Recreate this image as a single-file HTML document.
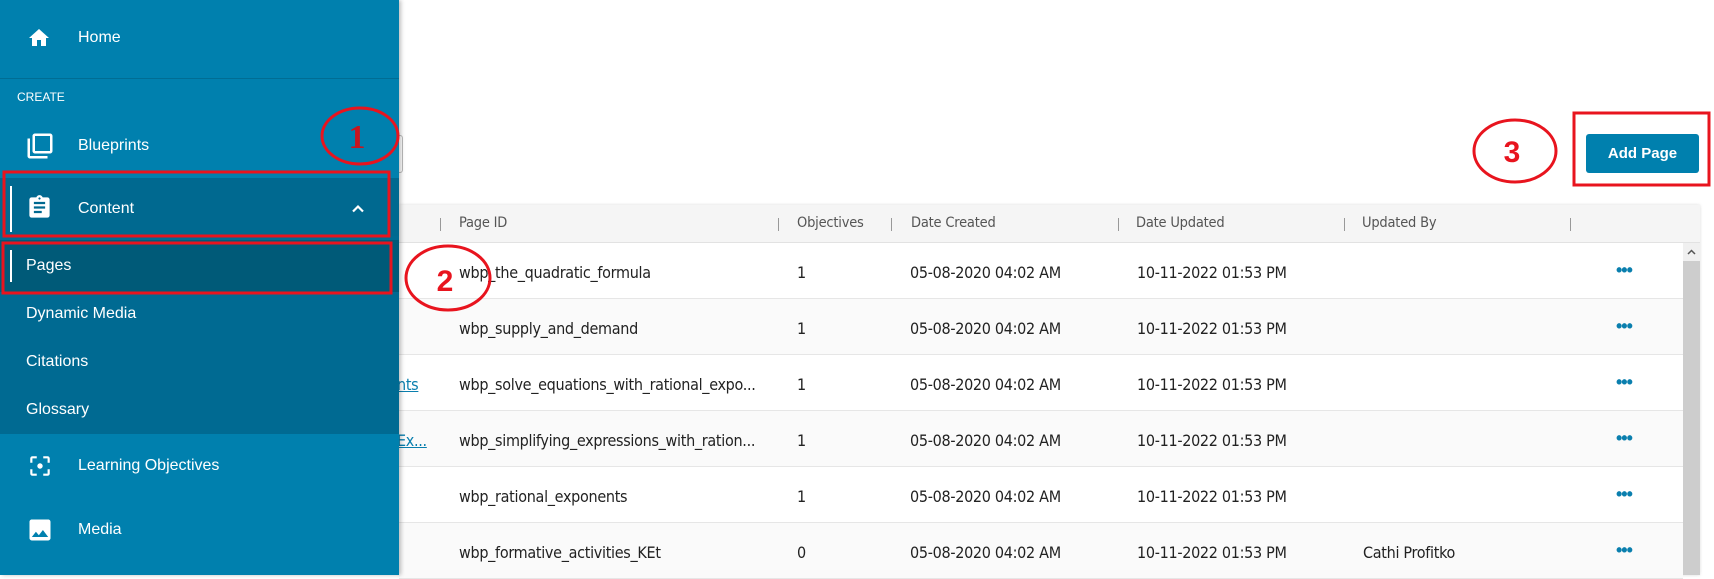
<!DOCTYPE html>
<html><head><meta charset="utf-8"><style>
*{margin:0;padding:0;box-sizing:border-box}
body{width:1714px;height:575px;overflow:hidden;background:#fff;font-family:"Liberation Sans",sans-serif;position:relative}
.a{position:absolute}
.sb{left:0;top:0;width:399px;height:575px;background:#0080ae;color:#fff;box-shadow:2px 0 4px rgba(0,0,0,.25)}
.sb .t{position:absolute;font-size:16px;white-space:nowrap}
.hd{font-size:14.5px;color:#555;white-space:nowrap;font-family:"DejaVu Sans Condensed","Liberation Sans",sans-serif;letter-spacing:-.2px}
.cell{font-size:16px;color:#222;white-space:nowrap;font-family:"DejaVu Sans Condensed","Liberation Sans",sans-serif;letter-spacing:-.3px}
.sep{width:1px;height:13px;background:#999}
.row{left:399px;width:1284px;height:56px;border-bottom:1px solid #e6e6e6}
.dots{color:#0a7fae;font-size:18px;font-weight:bold;letter-spacing:-1px}
</style></head><body>

<div class="a" style="left:380px;top:135px;width:23px;height:38px;border:1px solid #bbb;border-radius:3px"></div>

<div class="a" style="left:399px;top:205px;width:1301px;height:370px;box-shadow:0 0 3px rgba(0,0,0,.15)"></div>
<div class="a" style="left:399px;top:205px;width:1301px;height:38px;background:#f5f5f5;border-bottom:1px solid #e2e2e2"></div>
<div class="a sep" style="left:440px;top:218px"></div>
<div class="a hd" style="left:459px;top:215px">Page ID</div>
<div class="a sep" style="left:778px;top:218px"></div>
<div class="a hd" style="left:797px;top:215px">Objectives</div>
<div class="a sep" style="left:891px;top:218px"></div>
<div class="a hd" style="left:911px;top:215px">Date Created</div>
<div class="a sep" style="left:1118px;top:218px"></div>
<div class="a hd" style="left:1136px;top:215px">Date Updated</div>
<div class="a sep" style="left:1344px;top:218px"></div>
<div class="a hd" style="left:1362px;top:215px">Updated By</div>
<div class="a sep" style="left:1570px;top:218px"></div>

<div class="a row" style="top:243px;background:#fff"></div>
<div class="a row" style="top:299px;background:#fafafa"></div>
<div class="a row" style="top:355px;background:#fff"></div>
<div class="a row" style="top:411px;background:#fafafa"></div>
<div class="a row" style="top:467px;background:#fff"></div>
<div class="a row" style="top:523px;background:#fafafa"></div>

<div class="a" style="left:1683px;top:243px;width:17px;height:332px;background:#f0f0f0"></div>
<div class="a" style="left:1683px;top:261px;width:17px;height:314px;background:#cdcdcd"></div>
<svg class="a" style="left:1686px;top:247px" width="11" height="10" viewBox="0 0 11 10"><path d="M2 7l3.5-3.5L9 7" fill="none" stroke="#555" stroke-width="1.5"/></svg>

<div class="a cell" style="left:459px;top:263px">wbp_the_quadratic_formula</div>
<div class="a cell" style="left:459px;top:319px">wbp_supply_and_demand</div>
<div class="a cell" style="left:459px;top:375px">wbp_solve_equations_with_rational_expo...</div>
<div class="a cell" style="left:459px;top:431px">wbp_simplifying_expressions_with_ration...</div>
<div class="a cell" style="left:459px;top:487px">wbp_rational_exponents</div>
<div class="a cell" style="left:459px;top:543px">wbp_formative_activities_KEt</div>

<div class="a cell" style="left:397px;top:375px;color:#0a7fae;text-decoration:underline">nts</div>
<div class="a cell" style="left:397px;top:431px;color:#0a7fae;text-decoration:underline">Ex...</div>

<div class="a cell" style="left:797px;top:263px">1</div>
<div class="a cell" style="left:797px;top:319px">1</div>
<div class="a cell" style="left:797px;top:375px">1</div>
<div class="a cell" style="left:797px;top:431px">1</div>
<div class="a cell" style="left:797px;top:487px">1</div>
<div class="a cell" style="left:797px;top:543px">0</div>

<div class="a cell" style="left:910px;top:263px">05-08-2020 04:02 AM</div>
<div class="a cell" style="left:910px;top:319px">05-08-2020 04:02 AM</div>
<div class="a cell" style="left:910px;top:375px">05-08-2020 04:02 AM</div>
<div class="a cell" style="left:910px;top:431px">05-08-2020 04:02 AM</div>
<div class="a cell" style="left:910px;top:487px">05-08-2020 04:02 AM</div>
<div class="a cell" style="left:910px;top:543px">05-08-2020 04:02 AM</div>

<div class="a cell" style="left:1137px;top:263px">10-11-2022 01:53 PM</div>
<div class="a cell" style="left:1137px;top:319px">10-11-2022 01:53 PM</div>
<div class="a cell" style="left:1137px;top:375px">10-11-2022 01:53 PM</div>
<div class="a cell" style="left:1137px;top:431px">10-11-2022 01:53 PM</div>
<div class="a cell" style="left:1137px;top:487px">10-11-2022 01:53 PM</div>
<div class="a cell" style="left:1137px;top:543px">10-11-2022 01:53 PM</div>
<div class="a cell" style="left:1363px;top:543px">Cathi Profitko</div>

<div class="a dots" style="left:1616px;top:260px">•••</div>
<div class="a dots" style="left:1616px;top:316px">•••</div>
<div class="a dots" style="left:1616px;top:372px">•••</div>
<div class="a dots" style="left:1616px;top:428px">•••</div>
<div class="a dots" style="left:1616px;top:484px">•••</div>
<div class="a dots" style="left:1616px;top:540px">•••</div>

<div class="a" style="left:1586px;top:134px;width:113px;height:39px;background:#0080ae;border-radius:3px;color:#fff;font-weight:bold;font-size:15px;text-align:center;line-height:39px">Add Page</div>

<div class="a sb">
  <div class="a" style="left:0;top:78px;width:399px;height:1px;background:#006d94"></div>
  <svg class="a" style="left:27px;top:26px" width="24" height="24" viewBox="0 0 24 24"><path d="M10 20v-6h4v6h5v-8h3L12 3 2 12h3v8z" fill="#fff"/></svg>
  <div class="t" style="left:78px;top:29px">Home</div>
  <div class="t" style="left:17px;top:90px;font-size:12px">CREATE</div>
  <svg class="a" style="left:25px;top:131px" width="30" height="30" viewBox="0 0 24 24"><path d="M4 6H2v14c0 1.1.9 2 2 2h14v-2H4V6zm16-4H8c-1.1 0-2 .9-2 2v12c0 1.1.9 2 2 2h12c1.1 0 2-.9 2-2V4c0-1.1-.9-2-2-2zm0 14H8V4h12v12z" fill="#fff"/></svg>
  <div class="t" style="left:78px;top:137px">Blueprints</div>
  <div class="a" style="left:0;top:178px;width:399px;height:58px;background:#006990"></div>
  <div class="a" style="left:10px;top:186px;width:2px;height:46px;background:#fff"></div>
  <svg class="a" style="left:26px;top:194px" width="27" height="27" viewBox="0 0 24 24"><path d="M19 3h-4.18C14.4 1.84 13.3 1 12 1s-2.4.84-2.820 2H5c-1.1 0-2 .9-2 2v14c0 1.1.9 2 2 2h14c1.1 0 2-.9 2-2V5c0-1.1-.9-2-2-2zm-7 0c.55 0 1 .45 1 1s-.45 1-1 1-1-.45-1-1 .45-1 1-1zm2 14H7v-2h7v2zm3-4H7v-2h10v2zm0-4H7V7h10v2z" fill="#fff"/></svg>
  <div class="t" style="left:78px;top:200px">Content</div>
  <svg class="a" style="left:348px;top:199px" width="20" height="20" viewBox="0 0 24 24"><path d="M6 15l6-6 6 6" fill="none" stroke="#fff" stroke-width="2.6"/></svg>
  <div class="a" style="left:0;top:236px;width:399px;height:198px;background:#006a92"></div>
  <div class="a" style="left:0;top:240px;width:399px;height:52px;background:#005a78"></div>
  <div class="a" style="left:10px;top:250px;width:2px;height:32px;background:#fff"></div>
  <div class="t" style="left:26px;top:257px">Pages</div>
  <div class="t" style="left:26px;top:305px">Dynamic Media</div>
  <div class="t" style="left:26px;top:353px">Citations</div>
  <div class="t" style="left:26px;top:401px">Glossary</div>
  <svg class="a" style="left:27px;top:453px" width="26" height="26" viewBox="0 0 24 24"><path d="M5 15H3v4c0 1.1.9 2 2 2h4v-2H5v-4zM5 5h4V3H5c-1.1 0-2 .9-2 2v4h2V5zm14-2h-4v2h4v4h2V5c0-1.1-.9-2-2-2zm0 16h-4v2h4c1.1 0 2-.9 2-2v-4h-2v4zM12 9.5a2.5 2.5 0 1 0 0 5 2.5 2.5 0 0 0 0-5z" fill="#fff"/></svg>
  <div class="t" style="left:78px;top:457px">Learning Objectives</div>
  <svg class="a" style="left:26px;top:516px" width="28" height="28" viewBox="0 0 24 24"><path d="M21 19V5c0-1.1-.9-2-2-2H5c-1.1 0-2 .9-2 2v14c0 1.1.9 2 2 2h14c1.1 0 2-.9 2-2zM8.5 13.5l2.5 3 3.5-4.5 4.5 6H5l3.5-4.5z" fill="#fff"/></svg>
  <div class="t" style="left:78px;top:521px">Media</div>
</div>

<svg class="a" style="left:0;top:0" width="1714" height="575">
  <g fill="none" stroke="#e8141e" stroke-width="3">
    <rect x="4" y="172" width="385" height="64"/>
    <rect x="3" y="243" width="388" height="50"/>
    <rect x="1574" y="113" width="135" height="72"/>
    <ellipse cx="360" cy="136" rx="38" ry="28"/>
    <ellipse cx="448" cy="278" rx="42" ry="32"/>
    <ellipse cx="1515" cy="151" rx="41" ry="31"/>
  </g>
  <g fill="#c8141e" font-family="Liberation Serif,serif" font-weight="bold" font-size="34" text-anchor="middle">
    <text x="357" y="148">1</text>
  </g>
  <g fill="#e8141e" font-family="Liberation Sans,sans-serif" font-weight="bold" font-size="30" text-anchor="middle">
    <text x="445" y="291">2</text>
    <text x="1512" y="162">3</text>
  </g>
</svg>
</body></html>
